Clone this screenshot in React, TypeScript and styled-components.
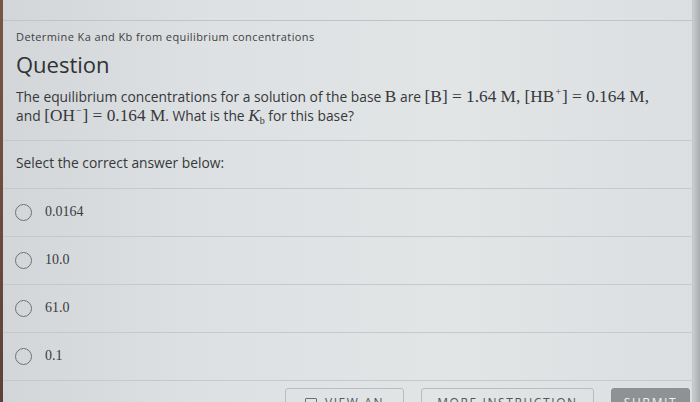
import styled, { createGlobalStyle } from 'styled-components';

const GlobalStyle = createGlobalStyle`
  html, body {
    margin: 0;
    padding: 0;
    width: 700px;
    height: 402px;
    overflow: hidden;
    background: #d9dcdf;
  }
  * {
    box-sizing: border-box;
  }
`;

const OPTIONS = ['0.0164', '10.0', '61.0', '0.1'];

export default function App() {
  return (
    <>
      <GlobalStyle />
      <Screen>
        <Bezel />
        <Panel>
          <TopBar />
          <Header>
            <Subtitle>Determine Ka and Kb from equilibrium concentrations</Subtitle>
            <Title>Question</Title>
            <Prompt>
              The equilibrium concentrations for a solution of the base <M>B</M> are{' '}
              <M>
                [B] = 1.64 M, [HB<sup>+</sup>] = 0.164 M,
              </M>
              <br />
              and{' '}
              <M>
                [OH<sup>−</sup>] = 0.164 M
              </M>
              . What is the{' '}
              <M>
                <i>K</i>
                <sub>b</sub>
              </M>{' '}
              for this base?
            </Prompt>
          </Header>
          <Instruction>Select the correct answer below:</Instruction>
          <OptionList>
            {OPTIONS.map((opt) => (
              <OptionRow key={opt}>
                <Radio />
                <OptionText>{opt}</OptionText>
              </OptionRow>
            ))}
          </OptionList>
          <Footer>
            <ActionButton $width={119}>
              <ButtonIcon />
              VIEW AN
            </ActionButton>
            <ActionButton $width={173}>MORE INSTRUCTION</ActionButton>
            <ActionButton $width={79} $primary>
              SUBMIT
            </ActionButton>
          </Footer>
        </Panel>
        <Edge />
      </Screen>
    </>
  );
}

const Screen = styled.div`
  display: flex;
  width: 700px;
  height: 402px;
  overflow: hidden;
  background: linear-gradient(90deg, #d2d6d9 0%, #dde1e3 30%, #e2e5e6 65%, #dcdfe1 100%);
`;

const Bezel = styled.div`
  width: 3px;
  flex-shrink: 0;
  background: linear-gradient(180deg, #7a5546 0%, #5e4236 100%);
`;

const Edge = styled.div`
  width: 7px;
  flex-shrink: 0;
  background: linear-gradient(90deg, #c9ccce 0%, #a9acaf 100%);
`;

const Panel = styled.div`
  flex: 1;
  display: flex;
  flex-direction: column;
  border-right: 1px solid #c4c8ca;
  font-family: 'Open Sans', 'Noto Sans', sans-serif;
  color: #3a3b3d;
  & > * {
    flex-shrink: 0;
  }
`;

const TopBar = styled.div`
  height: 21px;
  border-bottom: 1px solid #c0c4c7;
`;

const Header = styled.section`
  padding: 9px 13px 15px 13px;
  border-bottom: 1px solid #c5c9cb;
`;

const Subtitle = styled.div`
  font-size: 11px;
  line-height: 14px;
  letter-spacing: 0.4px;
  color: #3d3f42;
`;

const Title = styled.h1`
  margin: 6px 0 0 0;
  font-size: 22px;
  line-height: 28px;
  font-weight: 400;
  color: #2f3133;
`;

const Prompt = styled.p`
  margin: 9px 0 0 0;
  font-size: 13.8px;
  line-height: 19px;
  color: #36383a;
`;

const M = styled.span`
  font-family: 'Liberation Serif', 'Times New Roman', serif;
  font-size: 17.3px;
  sup {
    font-size: 10px;
    line-height: 0;
    vertical-align: 7px;
    padding: 0 1px;
  }
  sub {
    font-size: 10px;
    line-height: 0;
    vertical-align: -3px;
  }
`;

const Instruction = styled.div`
  height: 48px;
  display: flex;
  align-items: center;
  padding: 0 13px 4px 13px;
  font-size: 13.8px;
  color: #36383a;
  border-bottom: 1px solid #c5c9cb;
`;

const OptionList = styled.ul`
  list-style: none;
  margin: 0;
  padding: 0;
`;

const OptionRow = styled.li`
  height: 48px;
  display: flex;
  align-items: center;
  gap: 13px;
  padding: 0 0 1px 12px;
  border-bottom: 1px solid #c5c9cb;
`;

const Radio = styled.span`
  width: 17px;
  height: 17px;
  border-radius: 50%;
  border: 1.7px solid #6f7275;
  flex-shrink: 0;
`;

const OptionText = styled.span`
  font-family: 'Liberation Serif', 'Times New Roman', serif;
  font-size: 14px;
  color: #3a3b3d;
`;

const Footer = styled.div`
  display: flex;
  justify-content: flex-end;
  gap: 17px;
  padding: 7px 2px 0 0;
`;

const ActionButton = styled.button<{ $width: number; $primary?: boolean }>`
  width: ${({ $width }) => $width}px;
  height: 32px;
  flex-shrink: 0;
  display: flex;
  align-items: flex-start;
  justify-content: center;
  gap: 8px;
  padding: 7px 8px 0 8px;
  border-radius: 3px;
  border: 1px solid ${({ $primary }) => ($primary ? '#8d9093' : '#b9bdc0')};
  background: ${({ $primary }) => ($primary ? '#8f9295' : 'transparent')};
  color: ${({ $primary }) => ($primary ? '#eef0f1' : '#55585b')};
  font-family: 'Open Sans', sans-serif;
  font-size: 12px;
  letter-spacing: 1.6px;
  line-height: 14px;
`;

const ButtonIcon = styled.span`
  width: 12px;
  height: 10px;
  margin-top: 2px;
  border: 1.5px solid #6c6f72;
  border-radius: 1px;
`;
